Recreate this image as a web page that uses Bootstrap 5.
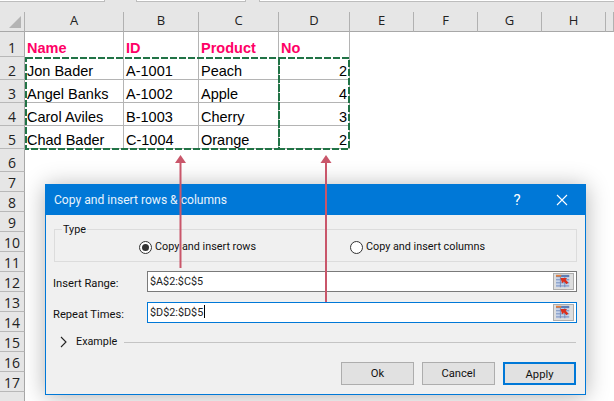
<!DOCTYPE html>
<html lang="en"><head><meta charset="utf-8"><title>Copy and insert rows & columns</title>
<link href="https://cdn.jsdelivr.net/npm/bootstrap@5.3.0/dist/css/bootstrap.min.css" rel="stylesheet">
<style>
html,body{margin:0;height:401px;overflow:hidden;background:#fff}
.stage{position:relative;width:614px;height:401px;overflow:hidden;font-family:"Liberation Sans",Arial,sans-serif;color:#000}
.topstrip{height:12px;background:#e6e6e6;display:flex;align-items:flex-start}
.topbox{height:2px;background:#fff;border:1px solid #bdbdbd;border-top:0}
.box1{width:106px;margin-left:-1px}.box2{width:110px;margin-left:31px}.box3{flex:1;margin-left:13px;margin-right:-1px}
.sheet{border-collapse:separate;border-spacing:0;table-layout:fixed;width:614px}
.sheet td,.sheet th{padding:0;overflow:hidden;white-space:nowrap;font-weight:400}
.hrow th{height:20px;background:#e6e6e6;border-right:1px solid #b1b1b1;border-bottom:1px solid #a8a8a8;text-align:center;font:13px/17px "Open Sans",sans-serif;color:#222;vertical-align:top}
.hrow th.cnr{position:relative}
.cnr svg{display:block;margin:4px 0 0 9px}
.sheet th.rh{background:#e6e6e6;border-right:1px solid #a8a8a8;border-bottom:1px solid #b8b8b8;text-align:center;font:14px/16px "Open Sans",sans-serif;color:#222;vertical-align:bottom}
.sheet td.dc{border-right:1px solid #b4b4b4;border-bottom:1px solid #b4b4b4;padding:0 2px;font-size:14.5px;line-height:16px;vertical-align:bottom}
.sheet td.hd{font-weight:700;color:#ff0066;border-bottom:0;line-height:18px}
.r1 td,.r1 th{height:25px}
.rd td,.rd th{height:23px}
.rp td,.rp th{height:20px}
.num{text-align:right}
.ants{position:absolute;left:0;top:0;pointer-events:none}
.arrows{position:absolute;left:0;top:0;z-index:5;pointer-events:none}
.dlg{position:absolute;left:45px;top:184px;width:541px;height:211px;background:#f0f0f0;border:1px solid #0078d7;box-shadow:0 2px 22px rgba(0,0,0,.3);font:10.8px "Roboto",sans-serif;color:#111;z-index:2;display:flex;flex-direction:column}
.dlg-title{height:30px;background:#0078d7;color:#e8f3fc;font-size:12.1px;padding-left:8px;flex:none}
.dlg-ctrl{font-size:15px;color:#fff;width:16px;text-align:center}
.dlg-body{padding:14px 8px 0 8px;flex:1;display:flex;flex-direction:column}
.grp{position:relative;height:33px;border:1px solid #dcdcdc;margin-bottom:9px;margin-right:0;width:523px}
.grp-legend{position:absolute;left:7px;top:-7px;background:#f0f0f0;padding:0 1px;line-height:14px}
.radio-a,.radio-b{position:absolute;top:10px;display:flex;align-items:center;line-height:14px;gap:3px}
.radio-a{left:84px}.radio-b{left:295px}
.rdot{width:13px;height:13px;border-radius:50%;border:1px solid #333;background:#fff;display:block;flex:none;position:relative}
.rdot.on::after{content:"";position:absolute;left:2px;top:2px;width:7px;height:7px;border-radius:50%;background:#333}
.frow{width:523px;height:21px;margin-bottom:10px}
.flbl{width:94px;flex:none;padding-top:6px;margin-left:-1px;line-height:14px;font-size:11.2px}
.fbox{flex:1;height:21px;background:#fff;border:1px solid #7a7a7a;padding:0 2px 0 2px;line-height:17px;color:#222}
.fbox.act{border-color:#0078d7}
.caret-bar{display:inline-block;width:1px;height:13px;background:#000;vertical-align:-2px;margin-left:1px}
.picker{width:21px;height:17px;background:#dedede;border:1px solid #adadad;flex:none;display:block}
.exrow{height:14px;margin-top:2px}
.exline{flex:1;height:1px;background:#c4c4c4;margin-left:7px;margin-right:1px}
.extxt{margin-left:9px;line-height:14px}
.btnrow{margin-top:13px;gap:8px;width:523px;padding-right:1px}
.wbtn{width:73px;height:23px;background:#e1e1e1;border:1px solid #adadad;border-radius:0;font:11.2px "Roboto",sans-serif;color:#111;padding:0;line-height:21px}
.wbtn.def{border:2px solid #0078d7}
.dlg-x{margin:0 17px 0 31px}
.chev{margin-left:6px}
</style></head>
<body>
<div class="stage">
  <div class="topstrip"><span class="topbox box1"></span><span class="topbox box2"></span><span class="topbox box3"></span></div>
  <table class="sheet">
    <colgroup><col style="width:25px"><col style="width:99px"><col style="width:75px"><col style="width:80px"><col style="width:71px"><col style="width:64px"><col style="width:64px"><col style="width:64px"><col style="width:64px"><col></colgroup>
    <tr class="hrow"><th class="cnr"><svg width="13" height="13" viewBox="0 0 13 13"><path d="M12 0V12H0Z" fill="#b4b4b4"/></svg></th><th>A</th><th>B</th><th>C</th><th>D</th><th>E</th><th>F</th><th>G</th><th>H</th><th></th></tr>
    <tr class="r1"><th class="rh">1</th><td class="dc hd">Name</td><td class="dc hd">ID</td><td class="dc hd">Product</td><td class="dc hd">No</td><td colspan="5"></td></tr>
    <tr class="rd"><th class="rh">2</th><td class="dc">Jon Bader</td><td class="dc">A-1001</td><td class="dc">Peach</td><td class="dc num">2</td><td colspan="5"></td></tr>
    <tr class="rd"><th class="rh">3</th><td class="dc">Angel Banks</td><td class="dc">A-1002</td><td class="dc">Apple</td><td class="dc num">4</td><td colspan="5"></td></tr>
    <tr class="rd"><th class="rh">4</th><td class="dc">Carol Aviles</td><td class="dc">B-1003</td><td class="dc">Cherry</td><td class="dc num">3</td><td colspan="5"></td></tr>
    <tr class="rd"><th class="rh">5</th><td class="dc">Chad Bader</td><td class="dc">C-1004</td><td class="dc">Orange</td><td class="dc num">2</td><td colspan="5"></td></tr>
    <tr class="rd"><th class="rh">6</th><td colspan="9"></td></tr>
    <tr class="rp"><th class="rh">7</th><td colspan="9"></td></tr>
    <tr class="rp"><th class="rh">8</th><td colspan="9"></td></tr>
    <tr class="rp"><th class="rh">9</th><td colspan="9"></td></tr>
    <tr class="rp"><th class="rh">10</th><td colspan="9"></td></tr>
    <tr class="rp"><th class="rh">11</th><td colspan="9"></td></tr>
    <tr class="rp"><th class="rh">12</th><td colspan="9"></td></tr>
    <tr class="rp"><th class="rh">13</th><td colspan="9"></td></tr>
    <tr class="rp"><th class="rh">14</th><td colspan="9"></td></tr>
    <tr class="rp"><th class="rh">15</th><td colspan="9"></td></tr>
    <tr class="rp"><th class="rh">16</th><td colspan="9"></td></tr>
    <tr class="rp"><th class="rh">17</th><td colspan="9"></td></tr>
    <tr class="rp"><th class="rh"></th><td colspan="9"></td></tr>
  </table>

  <svg class="ants" width="614" height="401" fill="none" stroke="#217346" stroke-width="2" stroke-dasharray="7 2">
    <rect x="26" y="58" width="253" height="91"/>
    <rect x="279" y="58" width="70" height="91"/>
  </svg>

  <div class="dlg">
    <div class="dlg-title d-flex align-items-center justify-content-between">
      <span>Copy and insert rows &amp; columns</span>
      <span class="d-flex align-items-center">
        <span class="dlg-ctrl">?</span>
        <svg class="dlg-x" width="12" height="12" viewBox="0 0 12 12"><path d="M1 1L11 11M11 1L1 11" stroke="#fff" stroke-width="1.1"/></svg>
      </span>
    </div>
    <div class="dlg-body">
      <div class="grp">
        <span class="grp-legend">Type</span>
        <label class="radio-a"><span class="rdot on"></span>Copy and insert rows</label>
        <label class="radio-b"><span class="rdot"></span>Copy and insert columns</label>
      </div>
      <div class="frow d-flex">
        <span class="flbl">Insert Range:</span>
        <div class="fbox d-flex align-items-center justify-content-between"><span>$A$2:$C$5</span>
          <svg class="picker" viewBox="0 0 21 17"><use href="#pk"/></svg></div>
      </div>
      <div class="frow d-flex">
        <span class="flbl">Repeat Times:</span>
        <div class="fbox act d-flex align-items-center justify-content-between"><span>$D$2:$D$5<span class="caret-bar"></span></span>
          <svg class="picker" viewBox="0 0 21 17"><use href="#pk"/></svg></div>
      </div>
      <div class="exrow d-flex align-items-center">
        <svg class="chev" width="7" height="12" viewBox="0 0 7 12"><path d="M1 1L6 6L1 11" fill="none" stroke="#222" stroke-width="1.1"/></svg>
        <span class="extxt">Example</span><span class="exline"></span>
      </div>
      <div class="btnrow d-flex justify-content-end">
        <button class="wbtn" type="button">Ok</button>
        <button class="wbtn" type="button">Cancel</button>
        <button class="wbtn def" type="button">Apply</button>
      </div>
    </div>
  </div>

  <svg class="arrows" width="614" height="401">
    <g fill="#c9566a" stroke="none">
      <rect x="179.5" y="160" width="2" height="108"/><path d="M180.5 155L186 163H175Z"/>
      <rect x="325" y="160" width="2" height="142"/><path d="M326 155L331.500 163H320.500Z"/>
    </g>
  </svg>

  <svg width="0" height="0" class="position-absolute"><defs><g id="pk">
    <rect x="2" y="1" width="15" height="14" fill="#c6d3ea"/>
    <rect x="2" y="1" width="15" height="2.500" fill="#5d7cb4"/>
    <path d="M2 6.500H17M2 10H17M2 13.500H17M7 3V15M12 3V15" stroke="#6f8abb" stroke-width="1" fill="none"/>
    <rect x="2" y="1" width="6" height="2" fill="#e6803c"/>
    <path d="M7 4.500L14.500 4.500L13 6.500L16 9.500L14 11.500L11 8.500L9 10.500Z" fill="#dc2f1e"/>
  </g></defs></svg>
</div>
<script src="https://cdn.jsdelivr.net/npm/bootstrap@5.3.0/dist/js/bootstrap.bundle.min.js"></script>
</body></html>
